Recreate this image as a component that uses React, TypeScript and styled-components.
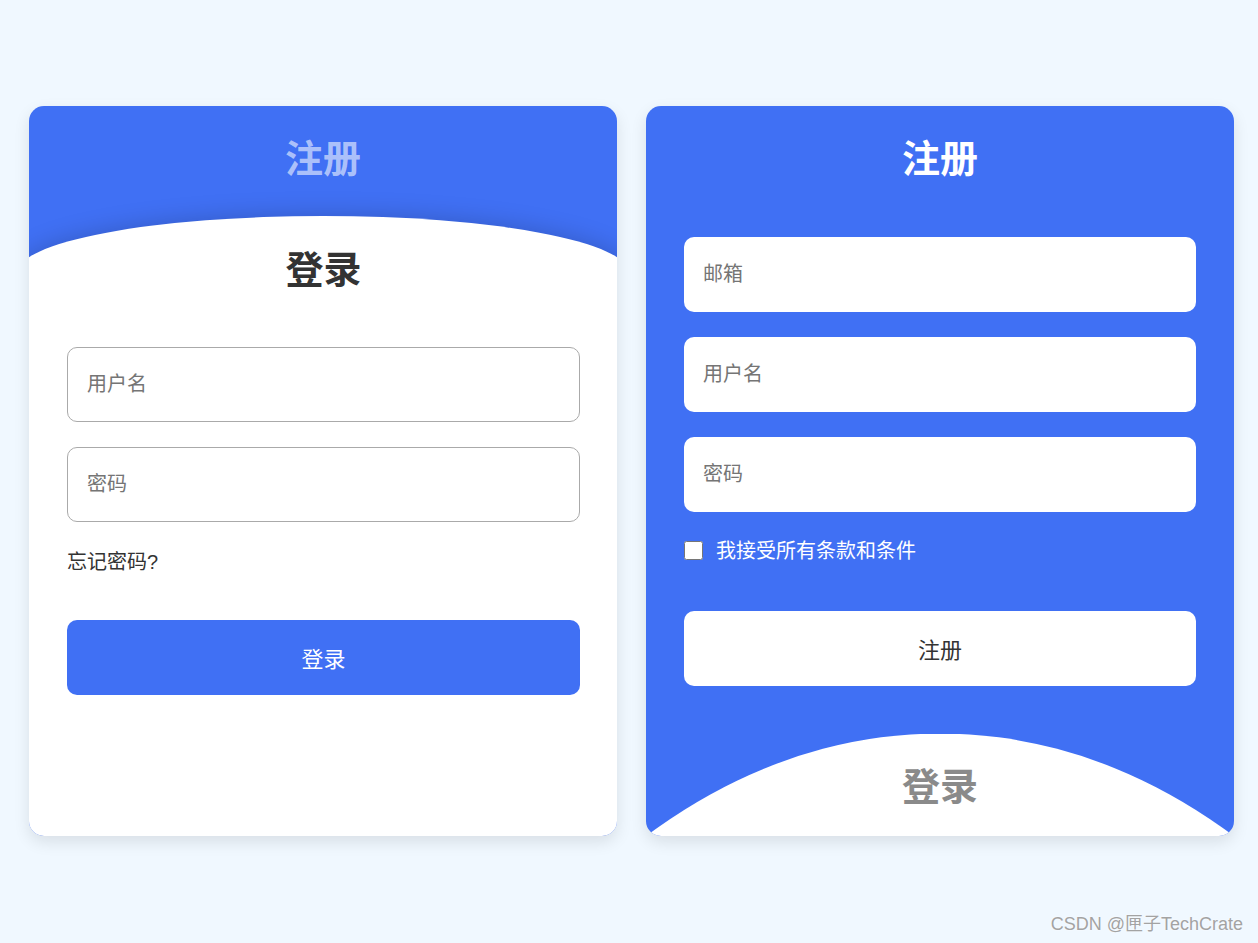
import React from 'react';
import styled, { createGlobalStyle } from 'styled-components';

const GlobalStyle = createGlobalStyle`
  * {
    box-sizing: border-box;
  }

  body {
    margin: 0;
    background: #f0f8ff;
    font-family: 'Liberation Sans', 'Noto Sans CJK SC', sans-serif;
    color: #333;
  }
`;

const BLUE = '#4070f4';

export default function App() {
  return (
    <>
      <GlobalStyle />
      <Page>
        <Board>
          <Card>
            <Header>
              <Heading $tone="faded">注册</Heading>
            </Header>
            <LoginPanel>
              <Title>登录</Title>
              <Fields>
                <Field $bordered placeholder="用户名" />
                <Field $bordered type="password" placeholder="密码" />
              </Fields>
              <Forgot>忘记密码?</Forgot>
              <Submit $variant="primary">登录</Submit>
            </LoginPanel>
          </Card>

          <Card>
            <Header>
              <Heading $tone="light">注册</Heading>
            </Header>
            <SignupForm>
              <Fields>
                <Field placeholder="邮箱" />
                <Field placeholder="用户名" />
                <Field type="password" placeholder="密码" />
              </Fields>
              <Terms>
                <Check type="checkbox" />
                <span>我接受所有条款和条件</span>
              </Terms>
              <Submit $variant="inverse">注册</Submit>
            </SignupForm>
            <CollapsedLogin>
              <Heading $tone="muted">登录</Heading>
            </CollapsedLogin>
          </Card>
        </Board>
        <Watermark>CSDN @匣子TechCrate</Watermark>
      </Page>
    </>
  );
}

const Page = styled.div`
  position: relative;
  min-height: 100vh;
  display: flex;
  align-items: center;
  padding-bottom: 2px;
`;

const Board = styled.div`
  display: flex;
  gap: 29px;
  padding-left: 29px;
`;

const Card = styled.div`
  width: 588px;
  height: 730px;
  display: flex;
  flex-direction: column;
  background: ${BLUE};
  border-radius: 15px;
  overflow: hidden;
  box-shadow: 0 6px 16px rgba(0, 0, 0, 0.1);
`;

const Header = styled.div`
  height: 110px;
  flex-shrink: 0;
  display: flex;
  align-items: center;
  justify-content: center;
  padding-bottom: 4px;
`;

const headingColors = {
  faded: 'rgba(255, 255, 255, 0.58)',
  light: '#ffffff',
  muted: '#8a8a8a',
};

const Heading = styled.h2<{ $tone: keyof typeof headingColors }>`
  margin: 0;
  font-size: 38px;
  line-height: 54px;
  font-weight: 700;
  color: ${({ $tone }) => headingColors[$tone]};
`;

// slightly wider than the card so the arc meets the sides at a slant
const LoginPanel = styled.div`
  flex: 1;
  display: flex;
  flex-direction: column;
  margin: 0 -12px;
  padding: 27px 49px 0 50px;
  background: #fff;
  border-radius: 50% 50% 0 0 / 57px 57px 0 0;
  box-shadow: 0 0 26px rgba(0, 0, 0, 0.2);
`;

const Title = styled(Heading).attrs({ $tone: 'light' as const })`
  color: #333;
  text-align: center;
  margin-bottom: 50px;
`;

const Fields = styled.div`
  display: flex;
  flex-direction: column;
  gap: 25px;
`;

const Field = styled.input<{ $bordered?: boolean }>`
  height: 75px;
  width: 100%;
  padding: 0 19px;
  border: ${({ $bordered }) => ($bordered ? '1px solid #aaa' : 'none')};
  border-radius: 10px;
  background: #fff;
  font-family: 'Liberation Sans', 'Noto Sans CJK SC', sans-serif;
  font-size: 20px;
  color: #333;
  outline: none;

  &::placeholder {
    color: #757575;
  }
`;

const Forgot = styled.a`
  margin-top: 28px;
  font-size: 20px;
  line-height: 24px;
  color: #333;
  cursor: pointer;
`;

const Submit = styled.button<{ $variant: 'primary' | 'inverse' }>`
  height: 75px;
  width: 100%;
  margin-top: ${({ $variant }) => ($variant === 'primary' ? '46px' : '48px')};
  border: none;
  border-radius: 10px;
  background: ${({ $variant }) => ($variant === 'primary' ? BLUE : '#fff')};
  color: ${({ $variant }) => ($variant === 'primary' ? '#fff' : '#333')};
  font-family: 'Liberation Sans', 'Noto Sans CJK SC', sans-serif;
  font-size: 22px;
  cursor: pointer;
`;

const SignupForm = styled.form`
  display: flex;
  flex-direction: column;
  padding: 21px 38px 0;
`;

const Terms = styled.label`
  display: flex;
  align-items: center;
  gap: 13px;
  margin-top: 27px;
  font-size: 20px;
  line-height: 24px;
  color: #fff;
`;

const Check = styled.input`
  width: 19px;
  height: 19px;
  margin: 0;
`;

// white dome that peeks up from the bottom of the signup card
const CollapsedLogin = styled.div`
  margin-top: auto;
  height: 102px;
  flex-shrink: 0;
  display: flex;
  justify-content: center;
  padding-top: 26px;
  background: #fff;
  clip-path: ellipse(600px 800px at 50% 800px);
`;

const Watermark = styled.div`
  position: absolute;
  right: 15px;
  bottom: 8px;
  font-size: 18px;
  color: #a3a3a3;
  text-shadow: 0 0 2px #fff;
`;
